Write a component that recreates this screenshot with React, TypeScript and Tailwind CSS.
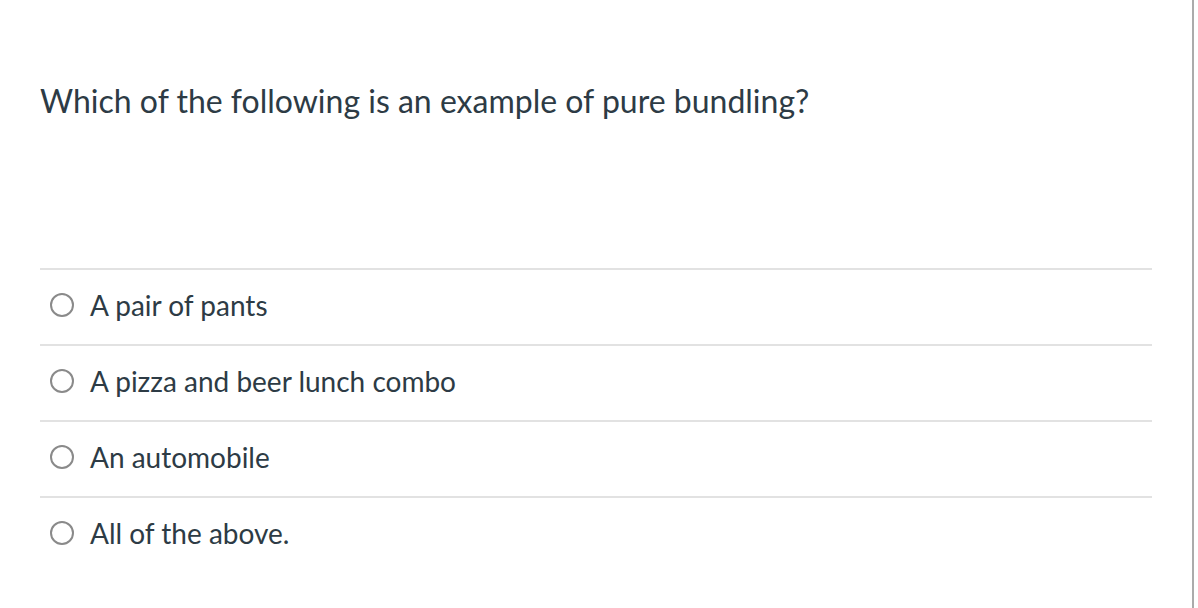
import React from "react";

const options = [
  "A pair of pants",
  "A pizza and beer lunch combo",
  "An automobile",
  "All of the above.",
];

export default function App() {
  return (
    <div className="flex h-[608px] w-[1198px] bg-white" style={{ fontFamily: "Lato, 'Open Sans', sans-serif" }}>
      <div className="flex w-[1192px] flex-col pl-[40px] pr-[40px]">
        <div className="flex h-[268px] flex-col pt-[80px]">
          <p className="text-[32px] leading-[42px] text-[#2d3b45]">Which of the following is an example of pure bundling?</p>
        </div>
        {options.map((o) => (
          <div key={o} className="flex h-[76px] items-center border-t-[2px] border-[#e2e2e2] pb-[4px] pl-[10px]">
            <span className="mr-[16px] h-[24px] w-[24px] shrink-0 rounded-full border-[2px] border-[#8a8a8a]" />
            <span className="text-[28px] leading-[36px] text-[#2d3b45]">{o}</span>
          </div>
        ))}
      </div>
      <div className="h-full w-[2px] bg-[#ababab]" />
    </div>
  );
}
